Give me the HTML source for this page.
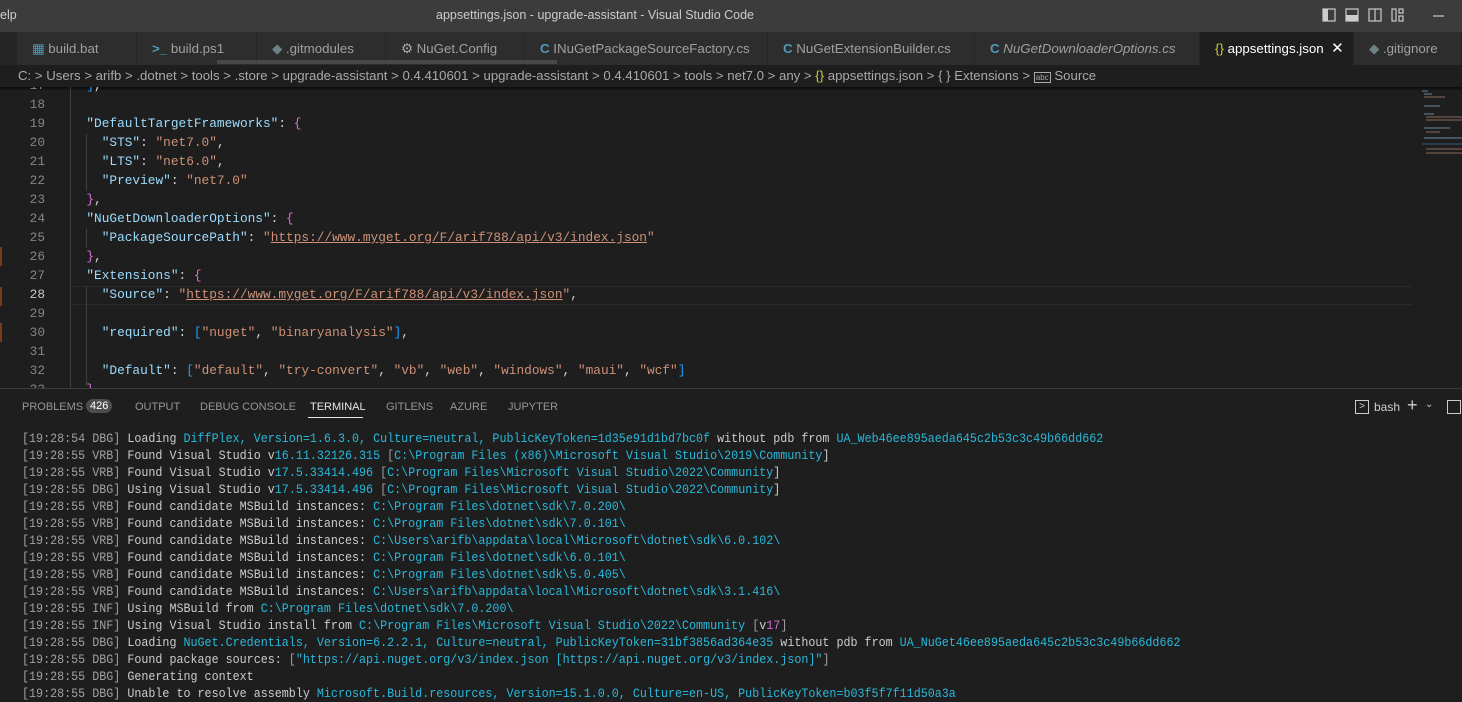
<!DOCTYPE html>
<html><head><meta charset="utf-8"><style>
*{margin:0;padding:0;box-sizing:border-box}
body{width:1462px;height:695px;overflow:hidden;background:#1e1e1e;font-family:"Liberation Sans",sans-serif;position:relative;color:#ccc}
.abs{position:absolute}
#title{left:0;top:0;width:1462px;height:32px;background:#3c3c3c;font-size:12.5px;color:#ccc}
#tabs{left:0;top:32px;width:1462px;height:33px;background:#252526}
.tab{position:absolute;top:0;height:33px;background:#2d2d2d;border-right:1px solid #252526;font-size:13.3px;color:#a0a0a0;line-height:33px;padding-left:15px;white-space:nowrap;overflow:hidden}
.tab.act{background:#1e1e1e;color:#fff}
#bc{left:0;top:65px;width:1462px;height:22px;background:#1e1e1e;font-size:13.2px;color:#a9a9a9;line-height:22px;padding-left:18px;white-space:nowrap}
.mono{font-family:"Liberation Mono",monospace}
.ed{font-size:12.8px;white-space:pre;line-height:19px;height:19px}
.ln{position:absolute;left:0;width:45px;text-align:right;color:#858585;font-family:"Liberation Mono",monospace;font-size:12.8px;line-height:19px}
.k{color:#9cdcfe}.s{color:#ce9178}.p{color:#d4d4d4}.b1{color:#da70d6}.b2{color:#179fff}
.u{text-decoration:underline;text-decoration-color:#ce9178}
.t{position:absolute;left:22px;font-size:13px;line-height:17px;white-space:pre;color:#cccccc;font-family:"Liberation Mono",monospace;transform:scaleX(0.9);transform-origin:0 0}
.g{color:#a0a0a0}.c{color:#29b8db}.m{color:#d670d6}
</style></head><body>
<div id="title" class="abs"><span class="abs" style="left:0;top:8px">elp</span><span class="abs" style="left:436px;top:8px">appsettings.json - upgrade-assistant - Visual Studio Code</span>
<svg class="abs" style="left:1322px;top:8px" width="140" height="16"><g fill="none" stroke="#ccc" stroke-width="1.2"><rect x="1" y="1" width="12" height="12"/><rect x="24" y="1" width="12" height="12"/><rect x="47" y="1" width="12" height="12"/><line x1="53" y1="1" x2="53" y2="13"/><rect x="70" y="1" width="4" height="12"/><rect x="77" y="1" width="4" height="4"/><rect x="77" y="8" width="4" height="5"/><line x1="111" y1="8" x2="122" y2="8"/></g><rect x="1" y="1" width="5" height="12" fill="#ccc"/><rect x="24" y="7" width="12" height="6" fill="#ccc"/></svg>
</div>
<div id="tabs" class="abs">
<div class="tab" style="left:17px;width:120px"><span style="color:#519aba">&#9638;</span> build.bat</div>
<div class="tab" style="left:137px;width:120px"><span style="color:#519aba;font-weight:bold">&gt;_</span> build.ps1</div>
<div class="tab" style="left:257px;width:129px"><span style="color:#6d8086">&#9670;</span> .gitmodules</div>
<div class="tab" style="left:386px;width:139px"><span style="color:#aaa">&#9881;</span> NuGet.Config</div>
<div class="tab" style="left:525px;width:243px"><span style="color:#519aba;font-weight:bold">C</span> INuGetPackageSourceFactory.cs</div>
<div class="tab" style="left:768px;width:207px"><span style="color:#519aba;font-weight:bold">C</span> NuGetExtensionBuilder.cs</div>
<div class="tab" style="left:975px;width:225px;font-style:italic"><span style="color:#519aba;font-weight:bold;font-style:normal">C</span> NuGetDownloaderOptions.cs</div>
<div class="tab act" style="left:1200px;width:154px"><span style="color:#cbcb41">{}</span> appsettings.json &nbsp;<span style="font-size:15px">✕</span></div>
<div class="tab" style="left:1354px;width:108px"><span style="color:#6d8086">&#9670;</span> .gitignore</div>
<div class="abs" style="left:217px;top:28px;width:340px;height:4px;background:#5a5a5a;opacity:.6"></div>
</div>
<div id="bc" class="abs">C: &gt; Users &gt; arifb &gt; .dotnet &gt; tools &gt; .store &gt; upgrade-assistant &gt; 0.4.410601 &gt; upgrade-assistant &gt; 0.4.410601 &gt; tools &gt; net7.0 &gt; any &gt; <span style="color:#cbcb41">{}</span> appsettings.json &gt; { } Extensions &gt; <span style="border:1px solid #aaa;font-size:8px;padding:0 1px">abc</span> Source</div>
<div class="abs" style="left:0;top:87px;width:1462px;height:301px;overflow:hidden">
<div class="abs" style="left:0;top:0;width:1462px;height:4px;background:linear-gradient(#000a,transparent)"></div>
<div class="abs" style="left:72px;top:199px;width:1341px;height:19px;border-top:1px solid #2a2a2a;border-bottom:1px solid #2a2a2a"></div>
<div class="abs" style="left:70px;top:0;width:1px;height:301px;background:#404040"></div>
<div class="abs" style="left:86px;top:47px;width:1px;height:57px;background:#404040"></div>
<div class="abs" style="left:86px;top:142px;width:1px;height:19px;background:#404040"></div>
<div class="abs" style="left:86px;top:199px;width:1px;height:100px;background:#404040"></div>
<div class="abs" style="left:0;top:236px;width:2px;height:19px;background:#7a3a1a"></div>
<div class="abs" style="left:0;top:160px;width:2px;height:19px;background:#7a3a1a"></div>
<div class="abs" style="left:0;top:200px;width:2px;height:19px;background:#7a3a1a"></div>
<div class="ln" style="top:-11px">17</div><div class="ln" style="top:8px">18</div><div class="ln" style="top:27px">19</div><div class="ln" style="top:46px">20</div><div class="ln" style="top:65px">21</div><div class="ln" style="top:84px">22</div><div class="ln" style="top:103px">23</div><div class="ln" style="top:122px">24</div><div class="ln" style="top:141px">25</div><div class="ln" style="top:160px">26</div><div class="ln" style="top:179px">27</div><div class="ln" style="top:198px;color:#c6c6c6">28</div><div class="ln" style="top:217px">29</div><div class="ln" style="top:236px">30</div><div class="ln" style="top:255px">31</div><div class="ln" style="top:274px">32</div><div class="ln" style="top:293px">33</div>
<div class="abs mono" style="left:71px;top:-11px">
<div class="ed">  <span class="b2">]</span><span class="p">,</span></div>
<div class="ed"> </div>
<div class="ed">  <span class="k">"DefaultTargetFrameworks"</span><span class="p">: </span><span class="b1">{</span></div>
<div class="ed">    <span class="k">"STS"</span><span class="p">: </span><span class="s">"net7.0"</span><span class="p">,</span></div>
<div class="ed">    <span class="k">"LTS"</span><span class="p">: </span><span class="s">"net6.0"</span><span class="p">,</span></div>
<div class="ed">    <span class="k">"Preview"</span><span class="p">: </span><span class="s">"net7.0"</span></div>
<div class="ed">  <span class="b1">}</span><span class="p">,</span></div>
<div class="ed">  <span class="k">"NuGetDownloaderOptions"</span><span class="p">: </span><span class="b1">{</span></div>
<div class="ed">    <span class="k">"PackageSourcePath"</span><span class="p">: </span><span class="s">"<span class="u">https://www.myget.org/F/arif788/api/v3/index.json</span>"</span></div>
<div class="ed">  <span class="b1">}</span><span class="p">,</span></div>
<div class="ed">  <span class="k">"Extensions"</span><span class="p">: </span><span class="b1">{</span></div>
<div class="ed">    <span class="k">"Source"</span><span class="p">: </span><span class="s">"<span class="u">https://www.myget.org/F/arif788/api/v3/index.json</span>"</span><span class="p">,</span></div>
<div class="ed"> </div>
<div class="ed">    <span class="k">"required"</span><span class="p">: </span><span class="b2">[</span><span class="s">"nuget"</span><span class="p">, </span><span class="s">"binaryanalysis"</span><span class="b2">]</span><span class="p">,</span></div>
<div class="ed"> </div>
<div class="ed">    <span class="k">"Default"</span><span class="p">: </span><span class="b2">[</span><span class="s">"default"</span><span class="p">, </span><span class="s">"try-convert"</span><span class="p">, </span><span class="s">"vb"</span><span class="p">, </span><span class="s">"web"</span><span class="p">, </span><span class="s">"windows"</span><span class="p">, </span><span class="s">"maui"</span><span class="p">, </span><span class="s">"wcf"</span><span class="b2">]</span></div>
<div class="ed">  <span class="b1">}</span></div>
</div>
<svg class="abs" style="left:1420px;top:2px" width="42" height="70"><g stroke-width="1"><line x1="2" y1="2" x2="8" y2="2" stroke="#6a8aa0"/><line x1="4" y1="5" x2="12" y2="5" stroke="#6a8aa0"/><line x1="4" y1="8" x2="25" y2="8" stroke="#8a6a5a"/><line x1="4" y1="17" x2="20" y2="17" stroke="#6a8aa0"/><line x1="4" y1="25" x2="14" y2="25" stroke="#6a8aa0"/><line x1="6" y1="28" x2="42" y2="28" stroke="#8a6a5a"/><line x1="6" y1="31" x2="42" y2="31" stroke="#8a6a5a"/><line x1="4" y1="39" x2="30" y2="39" stroke="#6a8aa0"/><line x1="6" y1="43" x2="20" y2="43" stroke="#8a6a5a"/><line x1="4" y1="49" x2="42" y2="49" stroke="#6a8aa0"/><line x1="2" y1="55" x2="42" y2="55" stroke="#3a5a7a"/><line x1="6" y1="60" x2="42" y2="60" stroke="#8a6a5a"/><line x1="6" y1="64" x2="42" y2="64" stroke="#8a6a5a"/></g></svg>
</div>
<div class="abs" style="left:0;top:388px;width:1462px;height:1px;background:#3c3c3c"></div>
<div class="abs" style="left:0;top:399px;width:1462px;height:18px;font-size:11px;color:#969696;white-space:nowrap">
<span class="abs" style="left:22px;top:2px">PROBLEMS</span>
<span class="abs" style="left:86px;top:0;background:#4d4d4d;color:#fff;border-radius:9px;padding:1px 4px;font-size:11px">426</span>
<span class="abs" style="left:135px;top:2px">OUTPUT</span>
<span class="abs" style="left:200px;top:2px">DEBUG CONSOLE</span>
<span class="abs" style="left:310px;top:2px;color:#e7e7e7">TERMINAL</span>
<span class="abs" style="left:308px;top:18px;width:55px;height:1px;background:#e7e7e7"></span>
<span class="abs" style="left:386px;top:2px">GITLENS</span>
<span class="abs" style="left:450px;top:2px">AZURE</span>
<span class="abs" style="left:508px;top:2px">JUPYTER</span>
<span class="abs" style="left:1355px;top:1px;width:14px;height:14px;border:1px solid #ccc;font-size:10px;color:#ccc;text-align:center;line-height:12px">&gt;</span>
<span class="abs" style="left:1374px;top:1px;color:#ccc;font-size:12px">bash</span>
<span class="abs" style="left:1407px;top:-4px;color:#ccc;font-size:18px">+</span>
<span class="abs" style="left:1425px;top:0;color:#ccc;font-size:10px">&#8964;</span>
<span class="abs" style="left:1447px;top:1px;width:14px;height:14px;border:1px solid #ccc"></span>
</div>
<div class="t" style="top:430px"><span class="g">[19:28:54 DBG]</span> Loading <span class="c">DiffPlex, Version=1.6.3.0, Culture=neutral, PublicKeyToken=1d35e91d1bd7bc0f</span> without pdb from <span class="c">UA_Web46ee895aeda645c2b53c3c49b66dd662</span></div>
<div class="t" style="top:447px"><span class="g">[19:28:55 VRB]</span> Found Visual Studio v<span class="c">16.11.32126.315</span> <span class="g">[</span><span class="c">C:\Program Files (x86)\Microsoft Visual Studio\2019\Community</span>]</div>
<div class="t" style="top:464px"><span class="g">[19:28:55 VRB]</span> Found Visual Studio v<span class="c">17.5.33414.496</span> <span class="g">[</span><span class="c">C:\Program Files\Microsoft Visual Studio\2022\Community</span>]</div>
<div class="t" style="top:481px"><span class="g">[19:28:55 DBG]</span> Using Visual Studio v<span class="c">17.5.33414.496</span> <span class="g">[</span><span class="c">C:\Program Files\Microsoft Visual Studio\2022\Community</span>]</div>
<div class="t" style="top:498px"><span class="g">[19:28:55 VRB]</span> Found candidate MSBuild instances: <span class="c">C:\Program Files\dotnet\sdk\7.0.200\</span></div>
<div class="t" style="top:515px"><span class="g">[19:28:55 VRB]</span> Found candidate MSBuild instances: <span class="c">C:\Program Files\dotnet\sdk\7.0.101\</span></div>
<div class="t" style="top:532px"><span class="g">[19:28:55 VRB]</span> Found candidate MSBuild instances: <span class="c">C:\Users\arifb\appdata\local\Microsoft\dotnet\sdk\6.0.102\</span></div>
<div class="t" style="top:549px"><span class="g">[19:28:55 VRB]</span> Found candidate MSBuild instances: <span class="c">C:\Program Files\dotnet\sdk\6.0.101\</span></div>
<div class="t" style="top:566px"><span class="g">[19:28:55 VRB]</span> Found candidate MSBuild instances: <span class="c">C:\Program Files\dotnet\sdk\5.0.405\</span></div>
<div class="t" style="top:583px"><span class="g">[19:28:55 VRB]</span> Found candidate MSBuild instances: <span class="c">C:\Users\arifb\appdata\local\Microsoft\dotnet\sdk\3.1.416\</span></div>
<div class="t" style="top:600px"><span class="g">[19:28:55 INF]</span> Using MSBuild from <span class="c">C:\Program Files\dotnet\sdk\7.0.200\</span></div>
<div class="t" style="top:617px"><span class="g">[19:28:55 INF]</span> Using Visual Studio install from <span class="c">C:\Program Files\Microsoft Visual Studio\2022\Community</span> <span class="g">[</span>v<span class="m">17</span><span class="g">]</span></div>
<div class="t" style="top:634px"><span class="g">[19:28:55 DBG]</span> Loading <span class="c">NuGet.Credentials, Version=6.2.2.1, Culture=neutral, PublicKeyToken=31bf3856ad364e35</span> without pdb from <span class="c">UA_NuGet46ee895aeda645c2b53c3c49b66dd662</span></div>
<div class="t" style="top:651px"><span class="g">[19:28:55 DBG]</span> Found package sources: <span class="g">[</span><span class="c">"https://api.nuget.org/v3/index.json [https://api.nuget.org/v3/index.json]"</span><span class="g">]</span></div>
<div class="t" style="top:668px"><span class="g">[19:28:55 DBG]</span> Generating context</div>
<div class="t" style="top:685px"><span class="g">[19:28:55 DBG]</span> Unable to resolve assembly <span class="c">Microsoft.Build.resources, Version=15.1.0.0, Culture=en-US, PublicKeyToken=b03f5f7f11d50a3a</span></div>
</body></html>
